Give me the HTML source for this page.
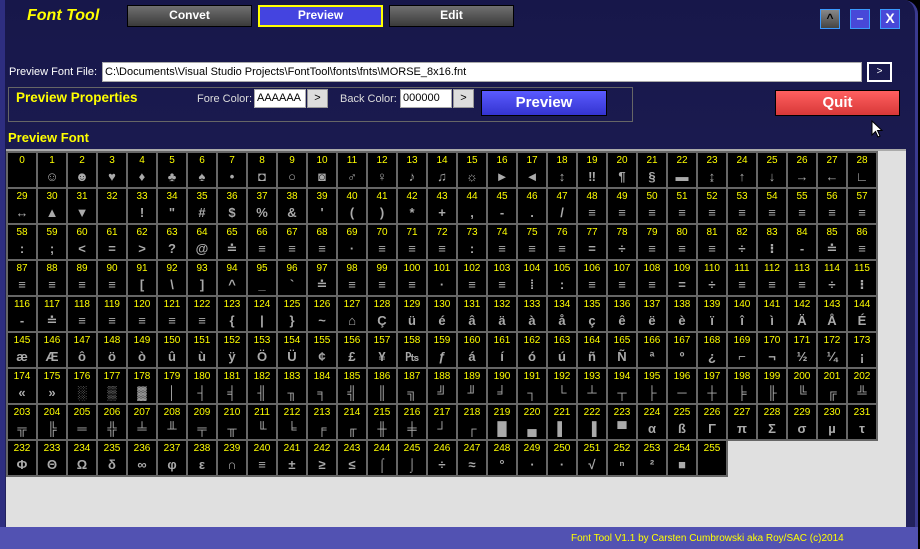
<!DOCTYPE html>
<html><head><meta charset="utf-8"><style>
*{margin:0;padding:0;box-sizing:border-box}
body{width:920px;height:549px;overflow:hidden;background:#000;font-family:"Liberation Sans","DejaVu Sans",sans-serif;position:relative}
.win{position:absolute;left:0;top:0;width:918px;height:549px;background:linear-gradient(#17174a,#23235e);border-radius:0 14px 0 0;border-left:5px solid #2e2e80;border-right:3px solid #3a3a90}
.a{position:absolute}
.tb{position:absolute;top:5px;height:22px;color:#fff;font-weight:bold;font-size:12px;text-align:center;line-height:19px;border:1px solid #000;background:linear-gradient(#707070,#3a3a3a)}
.wb{position:absolute;top:9px;width:20px;height:20px;border:1px solid #3a9aff;background:#4848d8;color:#fff;font-size:12px;text-align:center;line-height:17px;font-weight:bold}
.lbl{position:absolute;color:#fff;font-size:11px}
.inp{position:absolute;background:#fff;border:1px solid #aaa;font-size:11px;color:#000;padding-left:2px;line-height:16px}
.sb{position:absolute;background:#ddd;border:1px solid #999;font-size:11px;text-align:center;line-height:16px}
.panel{position:absolute;left:6px;top:149px;width:900px;height:378px;background:#e0e0e0;border-top:2px solid #aaa}
.grid{position:absolute;left:0;top:0;width:872px;display:flex;flex-wrap:wrap;border-top:2px solid #666;border-left:2px solid #666}
.grid i{display:block;width:30px;height:36px;background:#000;border-right:2px solid #666;border-bottom:2px solid #666;font-style:normal;text-align:center;color:#aaa;font-size:13px;line-height:14px;overflow:hidden;font-weight:bold}
.grid i b{display:block;color:#ff0;font-weight:normal;font-size:10px;line-height:10px;margin-top:3px;margin-bottom:4px}
.foot{position:absolute;left:0;top:527px;width:918px;height:22px;background:#5252b2}
</style></head><body>
<div class="win"></div>
<div class="a" style="left:27px;top:7px;color:#ff0;font-style:italic;font-weight:bold;font-size:16px">Font Tool</div>
<div class="tb" style="left:127px;width:125px">Convet</div>
<div class="tb" style="left:258px;width:125px;background:#4444e0;border:2px solid #ff0;line-height:17px">Preview</div>
<div class="tb" style="left:389px;width:125px">Edit</div>
<div class="wb" style="left:820px;background:linear-gradient(#888,#444);color:#000">^</div>
<div class="wb" style="left:850px">–</div>
<div class="wb" style="left:880px;font-size:14px">X</div>
<div class="lbl" style="left:9px;top:66px">Preview Font File:</div>
<div class="inp" style="left:102px;top:62px;width:760px;height:20px;line-height:18px">C:\Documents\Visual Studio Projects\FontTool\fonts\fnts\MORSE_8x16.fnt</div>
<div class="a" style="left:867px;top:62px;width:25px;height:20px;border:2px solid #fff;color:#fff;font-size:10px;text-align:center;line-height:15px">&gt;</div>
<div class="a" style="left:8px;top:87px;width:625px;height:35px;border:1px solid #666"></div>
<div class="a" style="left:16px;top:90px;color:#ff0;font-weight:bold;font-size:13.5px">Preview Properties</div>
<div class="lbl" style="left:197px;top:93px;color:#ddd">Fore Color:</div>
<div class="inp" style="left:254px;top:89px;width:52px;height:19px">AAAAAA</div>
<div class="sb" style="left:307px;top:89px;width:21px;height:19px">&gt;</div>
<div class="lbl" style="left:340px;top:93px;color:#ddd">Back Color:</div>
<div class="inp" style="left:400px;top:89px;width:52px;height:19px">000000</div>
<div class="sb" style="left:453px;top:89px;width:21px;height:19px">&gt;</div>
<div class="a" style="left:481px;top:90px;width:126px;height:26px;background:linear-gradient(#5a5aff,#3434d0);border:1px solid #000;color:#fff;font-size:15px;text-align:center;line-height:23px;font-weight:bold">Preview</div>
<div class="a" style="left:775px;top:90px;width:125px;height:26px;background:linear-gradient(#ff6060,#d83838);border:1px solid #000;color:#fff;font-size:15px;text-align:center;line-height:23px;font-weight:bold">Quit</div>
<svg class="a" style="left:871px;top:120px" width="14" height="20"><path d="M1 1 L1 15 L4.5 11.5 L7 17 L9 16 L6.5 10.5 L11 10.5 Z" fill="#fff" stroke="#000" stroke-width="1"/></svg>
<div class="a" style="left:8px;top:130px;color:#ff0;font-weight:bold;font-size:13px">Preview Font</div>
<div class="panel"><div class="grid">
<i><b>0</b>&nbsp;</i><i><b>1</b>☺</i><i><b>2</b>☻</i><i><b>3</b>♥</i><i><b>4</b>♦</i><i><b>5</b>♣</i><i><b>6</b>♠</i><i><b>7</b>•</i><i><b>8</b>◘</i><i><b>9</b>○</i><i><b>10</b>◙</i><i><b>11</b>♂</i><i><b>12</b>♀</i><i><b>13</b>♪</i><i><b>14</b>♫</i><i><b>15</b>☼</i><i><b>16</b>►</i><i><b>17</b>◄</i><i><b>18</b>↕</i><i><b>19</b>‼</i><i><b>20</b>¶</i><i><b>21</b>§</i><i><b>22</b>▬</i><i><b>23</b>↨</i><i><b>24</b>↑</i><i><b>25</b>↓</i><i><b>26</b>→</i><i><b>27</b>←</i><i><b>28</b>∟</i>
<i><b>29</b>↔</i><i><b>30</b>▲</i><i><b>31</b>▼</i><i><b>32</b>&nbsp;</i><i><b>33</b>!</i><i><b>34</b>"</i><i><b>35</b>#</i><i><b>36</b>$</i><i><b>37</b>%</i><i><b>38</b>&amp;</i><i><b>39</b>'</i><i><b>40</b>(</i><i><b>41</b>)</i><i><b>42</b>*</i><i><b>43</b>+</i><i><b>44</b>,</i><i><b>45</b>-</i><i><b>46</b>.</i><i><b>47</b>/</i><i><b>48</b>≡</i><i><b>49</b>≡</i><i><b>50</b>≡</i><i><b>51</b>≡</i><i><b>52</b>≡</i><i><b>53</b>≡</i><i><b>54</b>≡</i><i><b>55</b>≡</i><i><b>56</b>≡</i><i><b>57</b>≡</i>
<i><b>58</b>:</i><i><b>59</b>;</i><i><b>60</b>&lt;</i><i><b>61</b>=</i><i><b>62</b>&gt;</i><i><b>63</b>?</i><i><b>64</b>@</i><i><b>65</b>≐</i><i><b>66</b>≡</i><i><b>67</b>≡</i><i><b>68</b>≡</i><i><b>69</b>·</i><i><b>70</b>≡</i><i><b>71</b>≡</i><i><b>72</b>≡</i><i><b>73</b>:</i><i><b>74</b>≡</i><i><b>75</b>≡</i><i><b>76</b>≡</i><i><b>77</b>=</i><i><b>78</b>÷</i><i><b>79</b>≡</i><i><b>80</b>≡</i><i><b>81</b>≡</i><i><b>82</b>÷</i><i><b>83</b>⁝</i><i><b>84</b>-</i><i><b>85</b>≐</i><i><b>86</b>≡</i>
<i><b>87</b>≡</i><i><b>88</b>≡</i><i><b>89</b>≡</i><i><b>90</b>≡</i><i><b>91</b>[</i><i><b>92</b>\</i><i><b>93</b>]</i><i><b>94</b>^</i><i><b>95</b>_</i><i><b>96</b>`</i><i><b>97</b>≐</i><i><b>98</b>≡</i><i><b>99</b>≡</i><i><b>100</b>≡</i><i><b>101</b>·</i><i><b>102</b>≡</i><i><b>103</b>≡</i><i><b>104</b>⁞</i><i><b>105</b>:</i><i><b>106</b>≡</i><i><b>107</b>≡</i><i><b>108</b>≡</i><i><b>109</b>=</i><i><b>110</b>÷</i><i><b>111</b>≡</i><i><b>112</b>≡</i><i><b>113</b>≡</i><i><b>114</b>÷</i><i><b>115</b>⁝</i>
<i><b>116</b>-</i><i><b>117</b>≐</i><i><b>118</b>≡</i><i><b>119</b>≡</i><i><b>120</b>≡</i><i><b>121</b>≡</i><i><b>122</b>≡</i><i><b>123</b>{</i><i><b>124</b>|</i><i><b>125</b>}</i><i><b>126</b>~</i><i><b>127</b>⌂</i><i><b>128</b>Ç</i><i><b>129</b>ü</i><i><b>130</b>é</i><i><b>131</b>â</i><i><b>132</b>ä</i><i><b>133</b>à</i><i><b>134</b>å</i><i><b>135</b>ç</i><i><b>136</b>ê</i><i><b>137</b>ë</i><i><b>138</b>è</i><i><b>139</b>ï</i><i><b>140</b>î</i><i><b>141</b>ì</i><i><b>142</b>Ä</i><i><b>143</b>Å</i><i><b>144</b>É</i>
<i><b>145</b>æ</i><i><b>146</b>Æ</i><i><b>147</b>ô</i><i><b>148</b>ö</i><i><b>149</b>ò</i><i><b>150</b>û</i><i><b>151</b>ù</i><i><b>152</b>ÿ</i><i><b>153</b>Ö</i><i><b>154</b>Ü</i><i><b>155</b>¢</i><i><b>156</b>£</i><i><b>157</b>¥</i><i><b>158</b>₧</i><i><b>159</b>ƒ</i><i><b>160</b>á</i><i><b>161</b>í</i><i><b>162</b>ó</i><i><b>163</b>ú</i><i><b>164</b>ñ</i><i><b>165</b>Ñ</i><i><b>166</b>ª</i><i><b>167</b>º</i><i><b>168</b>¿</i><i><b>169</b>⌐</i><i><b>170</b>¬</i><i><b>171</b>½</i><i><b>172</b>¼</i><i><b>173</b>¡</i>
<i><b>174</b>«</i><i><b>175</b>»</i><i><b>176</b>░</i><i><b>177</b>▒</i><i><b>178</b>▓</i><i><b>179</b>│</i><i><b>180</b>┤</i><i><b>181</b>╡</i><i><b>182</b>╢</i><i><b>183</b>╖</i><i><b>184</b>╕</i><i><b>185</b>╣</i><i><b>186</b>║</i><i><b>187</b>╗</i><i><b>188</b>╝</i><i><b>189</b>╜</i><i><b>190</b>╛</i><i><b>191</b>┐</i><i><b>192</b>└</i><i><b>193</b>┴</i><i><b>194</b>┬</i><i><b>195</b>├</i><i><b>196</b>─</i><i><b>197</b>┼</i><i><b>198</b>╞</i><i><b>199</b>╟</i><i><b>200</b>╚</i><i><b>201</b>╔</i><i><b>202</b>╩</i>
<i><b>203</b>╦</i><i><b>204</b>╠</i><i><b>205</b>═</i><i><b>206</b>╬</i><i><b>207</b>╧</i><i><b>208</b>╨</i><i><b>209</b>╤</i><i><b>210</b>╥</i><i><b>211</b>╙</i><i><b>212</b>╘</i><i><b>213</b>╒</i><i><b>214</b>╓</i><i><b>215</b>╫</i><i><b>216</b>╪</i><i><b>217</b>┘</i><i><b>218</b>┌</i><i><b>219</b>█</i><i><b>220</b>▄</i><i><b>221</b>▌</i><i><b>222</b>▐</i><i><b>223</b>▀</i><i><b>224</b>α</i><i><b>225</b>ß</i><i><b>226</b>Γ</i><i><b>227</b>π</i><i><b>228</b>Σ</i><i><b>229</b>σ</i><i><b>230</b>µ</i><i><b>231</b>τ</i>
<i><b>232</b>Φ</i><i><b>233</b>Θ</i><i><b>234</b>Ω</i><i><b>235</b>δ</i><i><b>236</b>∞</i><i><b>237</b>φ</i><i><b>238</b>ε</i><i><b>239</b>∩</i><i><b>240</b>≡</i><i><b>241</b>±</i><i><b>242</b>≥</i><i><b>243</b>≤</i><i><b>244</b>⌠</i><i><b>245</b>⌡</i><i><b>246</b>÷</i><i><b>247</b>≈</i><i><b>248</b>°</i><i><b>249</b>∙</i><i><b>250</b>·</i><i><b>251</b>√</i><i><b>252</b>ⁿ</i><i><b>253</b>²</i><i><b>254</b>■</i><i><b>255</b>&nbsp;</i>
</div></div>
<div class="foot"></div>
<div class="a" style="left:571px;top:533px;color:#ff0;font-size:10px">Font Tool V1.1 by Carsten Cumbrowski aka Roy/SAC (c)2014</div>
</body></html>
